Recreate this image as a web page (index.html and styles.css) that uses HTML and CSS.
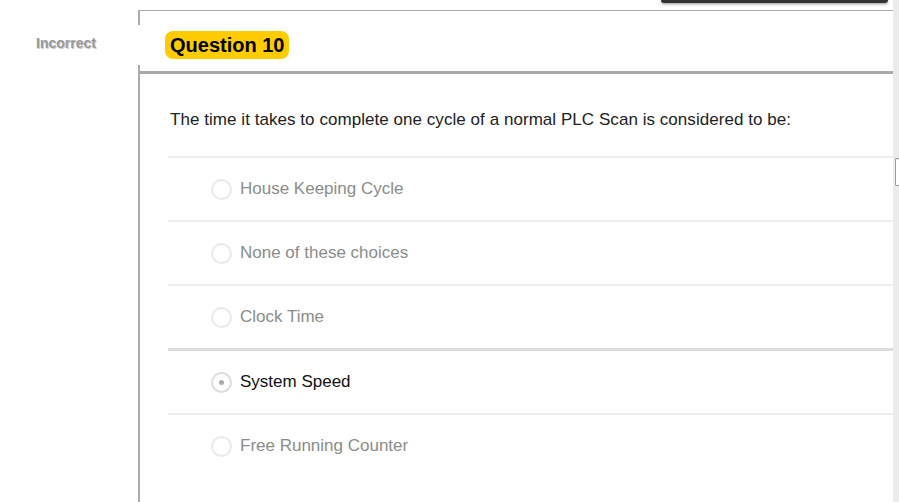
FILE: index.html
```html
<!DOCTYPE html>
<html lang="en">
<head>
    <meta charset="UTF-8">
    <meta name="viewport" content="width=device-width, initial-scale=1.0">
    <title>Question 10</title>
    <link rel="stylesheet" href="styles.css">
</head>
<body>
    <div class="toolbar"></div>
    <div class="page">
        <div class="info">
            <div class="state">Incorrect</div>
        </div>
        <div class="question">
            <div class="question-header">
                <h3 class="badge">Question 10</h3>
            </div>
            <div class="question-body">
                <p class="prompt">The time it takes to complete one cycle of a normal PLC Scan is considered to be:</p>
                <div class="answers">
                    <label class="answer">
                        <span class="radio"></span>
                        <span>House Keeping Cycle</span>
                    </label>
                    <label class="answer">
                        <span class="radio"></span>
                        <span>None of these choices</span>
                    </label>
                    <label class="answer">
                        <span class="radio"></span>
                        <span>Clock Time</span>
                    </label>
                    <label class="answer selected">
                        <span class="radio"></span>
                        <span>System Speed</span>
                    </label>
                    <label class="answer">
                        <span class="radio"></span>
                        <span>Free Running Counter</span>
                    </label>
                </div>
            </div>
        </div>
        <div class="scroll-strip">
            <div class="scroll-tab"></div>
        </div>
    </div>
</body>
</html>
```
FILE: styles.css
```css
body {
    margin: 0;
    font-family: "Liberation Sans", Arial, sans-serif;
    background-color: #fff;
    color: #222;
}

.toolbar {
    position: absolute;
    top: 0;
    left: 661px;
    width: 227px;
    height: 3px;
    background-color: #333;
    border-radius: 0 0 4px 4px;
    box-shadow: 0 1px 3px rgba(0, 0, 0, 0.45);
    z-index: 2;
}

.page {
    display: flex;
    min-height: 502px;
}

.info {
    width: 138px;
    flex-shrink: 0;
}

.state {
    padding: 35px 0 0 36px;
    font-size: 14px;
    font-weight: bold;
    line-height: 17px;
    color: #999;
    text-shadow: 1px 1px 0 #ccc;
}

.question {
    flex: 1;
    margin-top: 10px;
}

.question-header {
    height: 60px;
    border-top: 1px solid #aaa;
    border-bottom: 3px solid #aaa;
    background:
        linear-gradient(#aaa, #aaa) left top / 2px 14px no-repeat,
        linear-gradient(#aaa, #aaa) left bottom / 2px 6px no-repeat;
}

.badge {
    display: inline-block;
    margin: 20px 0 0 27px;
    padding: 0 5px;
    font-size: 20px;
    font-weight: bold;
    line-height: 28px;
    color: #000;
    background-color: #fc0;
    border-radius: 8px;
}

.question-body {
    border-left: 2px solid #aaa;
    padding: 36px 0 40px 28px;
}

.prompt {
    margin: 0 0 26px 2px;
    font-size: 17px;
    line-height: 20px;
    letter-spacing: 0.05px;
    color: #222;
}

.answer {
    display: flex;
    align-items: center;
    height: 62px;
    padding-left: 43px;
    border-top: 2px solid #eee;
    font-size: 17px;
    color: #8a8d8a;
}

.answer .radio {
    width: 17px;
    height: 17px;
    margin-right: 8px;
    border: 2px solid #eaeaea;
    border-radius: 50%;
    box-shadow: inset 0 0 1px rgba(0, 0, 0, 0.05);
    position: relative;
}

.answer.selected {
    border-top: 3px solid #ddd;
    color: #111;
}

.answer.selected .radio {
    border-color: #ddd;
}

.answer.selected .radio::after {
    content: "";
    position: absolute;
    top: 6px;
    left: 6px;
    width: 5px;
    height: 5px;
    border-radius: 50%;
    background-color: #aaa;
}

.scroll-strip {
    width: 6px;
    flex-shrink: 0;
    background-color: #ececec;
    position: relative;
}

.scroll-tab {
    position: absolute;
    top: 158px;
    left: 2px;
    width: 4px;
    height: 26px;
    background-color: #fff;
    border: 1px solid #999;
    border-right: none;
    border-radius: 2px 0 0 2px;
}
```
